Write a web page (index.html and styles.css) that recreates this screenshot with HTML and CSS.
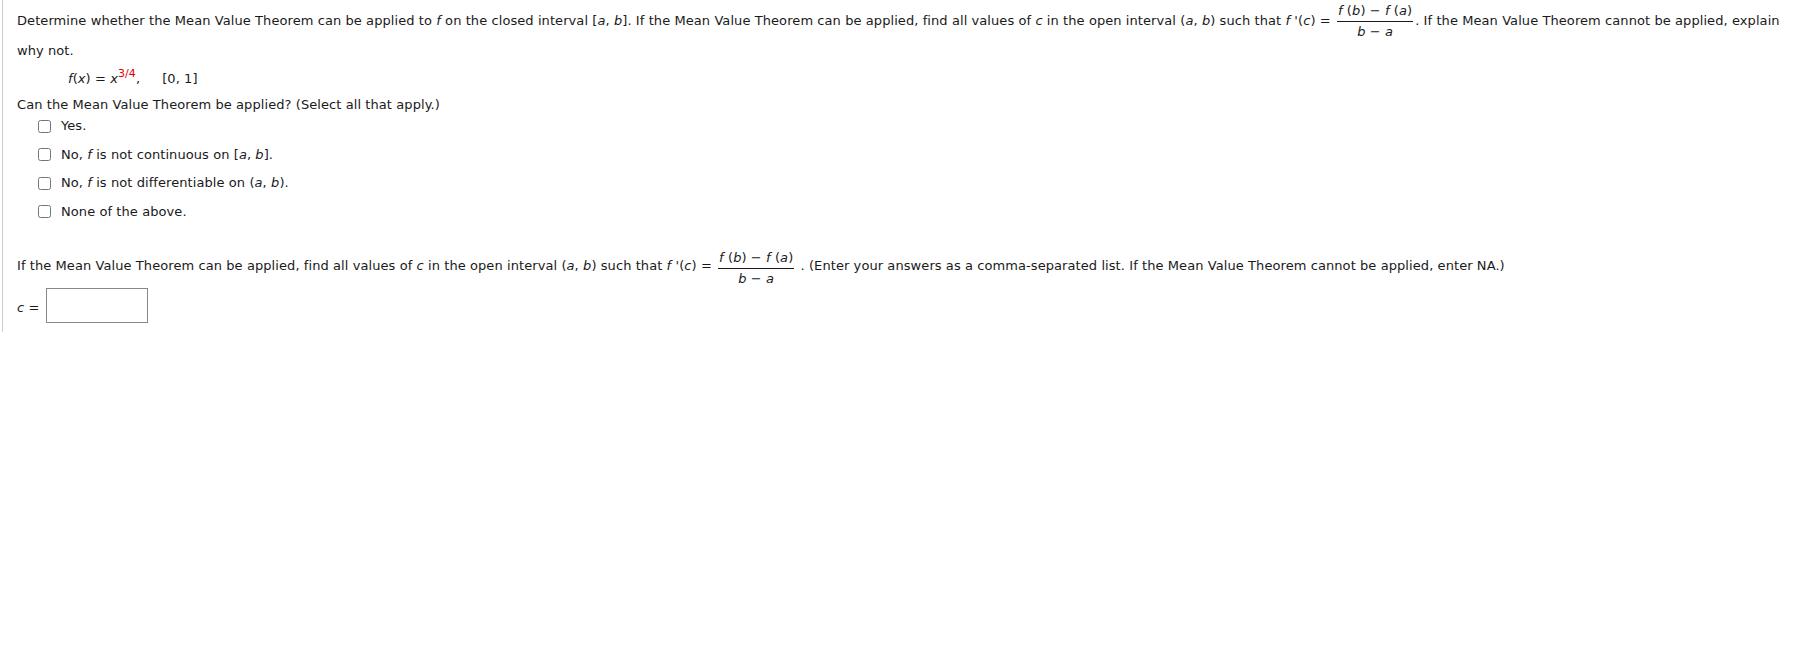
FILE: index.html
```html
<!DOCTYPE html>
<html>
<head>
<meta charset="utf-8">
<link rel="stylesheet" href="styles.css">
</head>
<body>
<div class="qbox">
  <p class="q">Determine whether the Mean Value Theorem can be applied to <i>f</i> on the closed interval [<i>a</i>, <i>b</i>]. If the Mean Value Theorem can be applied, find all values of <i>c</i> in the open interval (<i>a</i>, <i>b</i>) such that <i>f</i> '(<i>c</i>) = <span class="frac"><span class="num"><i>f</i> (<i>b</i>) − <i>f</i> (<i>a</i>)</span><span class="den"><i>b</i> − <i>a</i></span></span>. If the Mean Value Theorem cannot be applied, explain<br>why not.</p>
  <div class="eq"><i>f</i>(<i>x</i>) = <i>x</i><sup class="red">3/4</sup>,<span class="sp"></span>[0, 1]</div>
  <p class="prompt">Can the Mean Value Theorem be applied? (Select all that apply.)</p>
  <ul class="opts">
    <li><span class="cb"></span><span>Yes.</span></li>
    <li><span class="cb"></span><span>No, <i>f</i> is not continuous on [<i>a</i>, <i>b</i>].</span></li>
    <li><span class="cb"></span><span>No, <i>f</i> is not differentiable on (<i>a</i>, <i>b</i>).</span></li>
    <li><span class="cb"></span><span>None of the above.</span></li>
  </ul>
  <p class="q2">If the Mean Value Theorem can be applied, find all values of <i>c</i> in the open interval (<i>a</i>, <i>b</i>) such that <i>f</i> '(<i>c</i>) = <span class="frac low"><span class="num"><i>f</i> (<i>b</i>) − <i>f</i> (<i>a</i>)</span><span class="den"><i>b</i> − <i>a</i></span></span> . (Enter your answers as a comma-separated list. If the Mean Value Theorem cannot be applied, enter NA.)</p>
  <div class="ans"><span class="lbl"><i>c</i> =</span><span class="box"></span></div>
</div>
</body>
</html>
```
FILE: styles.css
```css
html, body {
  margin: 0;
  padding: 0;
  background: #fff;
}
body {
  font-family: "DejaVu Sans", Verdana, sans-serif;
  font-size: 13px;
  letter-spacing: 0.08px;
  color: #1a1a1a;
}
.qbox {
  margin-left: 2px;
  border-left: 1px solid #cccccc;
  padding: 1px 0 9px 14px;
}
p { margin: 0; }
.q {
  line-height: 18px;
  white-space: nowrap;
}
.frac {
  display: inline-block;
  vertical-align: middle;
  text-align: center;
  padding: 0 2px;
  line-height: 20px;
}
.frac.low {
  vertical-align: -13px;
}
.num, .den {
  display: block;
  padding: 0 1px;
}
.num {
  border-bottom: 1px solid #1a1a1a;
}
.eq {
  margin: 10px 0 0 51px;
  line-height: 18px;
}
.eq sup {
  line-height: 0;
  font-size: 11px;
  vertical-align: 6px;
}
.red { color: #e00000; }
.sp {
  display: inline-block;
  width: 22px;
}
.prompt {
  margin-top: 8px;
  line-height: 18px;
}
.opts {
  list-style: none;
  margin: 3px 0 0 21px;
  padding: 0;
  display: flex;
  flex-direction: column;
  gap: 10.5px;
}
.opts li {
  display: flex;
  align-items: center;
  gap: 10px;
  line-height: 18px;
}
.cb {
  width: 11px;
  height: 11px;
  border: 1px solid #767676;
  border-radius: 2.5px;
  flex: none;
}
.q2 {
  margin-top: 27px;
  line-height: 18px;
}
.ans {
  display: flex;
  align-items: center;
  gap: 7px;
  margin-top: -1px;
}
.lbl {
  margin-top: 4px;
}
.box {
  width: 100px;
  height: 33px;
  border: 1px solid #888;
}
```
